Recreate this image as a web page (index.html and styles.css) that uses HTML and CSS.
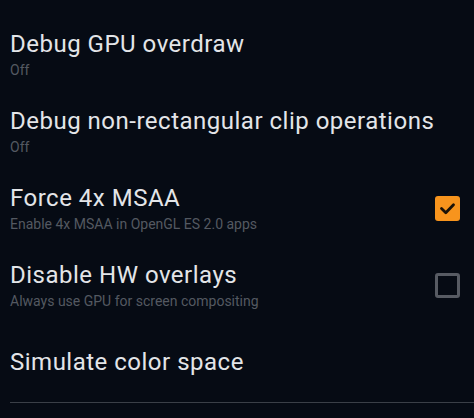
FILE: index.html
```html
<!DOCTYPE html>
<html>
<head>
<meta charset="utf-8">
<link rel="stylesheet" href="styles.css">
</head>
<body>
<div class="list">
  <div class="row">
    <div class="text">
      <div class="title">Debug GPU overdraw</div>
      <div class="sub">Off</div>
    </div>
  </div>
  <div class="row">
    <div class="text">
      <div class="title">Debug non-rectangular clip operations</div>
      <div class="sub">Off</div>
    </div>
  </div>
  <div class="row">
    <div class="text">
      <div class="title">Force 4x MSAA</div>
      <div class="sub">Enable 4x MSAA in OpenGL ES 2.0 apps</div>
    </div>
    <div class="check on">
      <svg width="25" height="25" viewBox="0 0 25 25"><path d="M6.5 12.5 L10.8 16.8 L18.5 8.8" fill="none" stroke="#1a1208" stroke-width="2.8" stroke-linecap="round" stroke-linejoin="round"/></svg>
    </div>
  </div>
  <div class="row">
    <div class="text">
      <div class="title">Disable HW overlays</div>
      <div class="sub">Always use GPU for screen compositing</div>
    </div>
    <div class="check off"></div>
  </div>
  <div class="row last">
    <div class="text">
      <div class="title">Simulate color space</div>
    </div>
  </div>
  <div class="divider"></div>
</div>
</body>
</html>
```
FILE: styles.css
```css
html, body {
  margin: 0;
  padding: 0;
  background: #060b14;
  width: 474px;
  height: 418px;
  overflow: hidden;
}
.list {
  padding-top: 15px;
  font-family: Roboto, "Noto Sans", sans-serif;
}
.row {
  display: flex;
  align-items: center;
  height: 77px;
  box-sizing: border-box;
  padding: 15px 14px 14px 10px;
}
.row.last {
  height: 79px;
  padding-top: 25px;
  padding-bottom: 26px;
}
.text {
  flex: 1;
  display: flex;
  flex-direction: column;
  gap: 4px;
}
.title {
  font-size: 24px;
  line-height: 28px;
  letter-spacing: 0.5px;
  color: #e3e5e8;
  white-space: nowrap;
}
.sub {
  font-size: 14px;
  line-height: 16px;
  color: #545961;
  white-space: nowrap;
}
.check {
  width: 25px;
  height: 25px;
  box-sizing: border-box;
  border-radius: 3px;
}
.check svg { display: block; }
.check.on {
  background: #f7941d;
}
.check.off {
  border: 3px solid #575b63;
}
.divider {
  margin-left: 10px;
  height: 1px;
  background: #3a3f47;
}
```
